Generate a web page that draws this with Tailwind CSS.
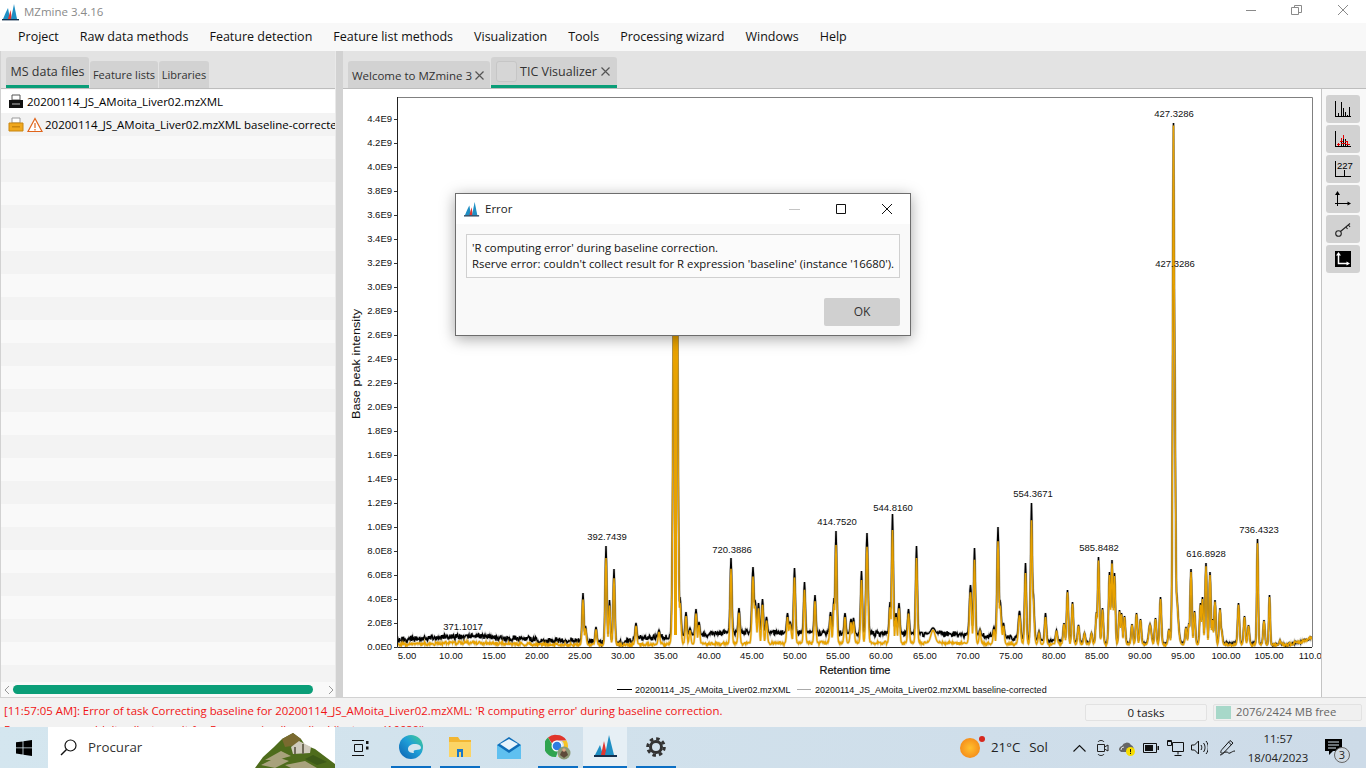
<!DOCTYPE html>
<html lang="en">
<head>
<meta charset="utf-8">
<title>MZmine 3.4.16</title>
<script src="https://cdn.jsdelivr.net/npm/@tailwindcss/browser@4"></script>
</head>
<body class="m-0 overflow-hidden bg-white">
<div class="relative flex h-[768px] w-[1366px] flex-col overflow-hidden font-['Open_Sans','Noto_Sans',sans-serif] text-black">

  <!-- title bar -->
  <div class="flex h-[23px] shrink-0 items-center bg-white">
    <svg class="ml-[2px] h-[18px] w-[18px]" viewBox="0 0 18 18"><path d="M1 16 4 9 6 5 8 16Z" fill="#1f8fc4"/><path d="M6 16 8.500 7 10 16Z" fill="#e2362f"/><path d="M9 16 12 1 15 16Z" fill="#1f8fc4"/><path d="M0 16h17v1.400H0Z" fill="#12304f"/></svg>
    <span class="ml-[4px] text-[11.500px] text-[#8a8a8a]">MZmine 3.4.16</span>
    <div class="ml-auto flex h-full items-center">
      <svg class="h-[23px] w-[46px]" viewBox="0 0 46 23"><path d="M18 10.500h10" stroke="#8a8a8a" fill="none"/></svg>
      <svg class="h-[23px] w-[46px]" viewBox="0 0 46 23"><path d="M17.500 7.500h7v7h-7ZM20.500 7.500v-2h7v7h-3" stroke="#8a8a8a" fill="none"/></svg>
      <svg class="h-[23px] w-[46px]" viewBox="0 0 46 23"><path d="M18 5l10 10M28 5 18 15" stroke="#8a8a8a" fill="none"/></svg>
    </div>
  </div>

  <!-- menu bar -->
  <div class="flex h-[28px] shrink-0 items-center gap-[21px] bg-[#f8f8f8] pl-[18px] pt-[1px] text-[12.500px] text-[#111]">
    <span>Project</span><span>Raw data methods</span><span>Feature detection</span><span>Feature list methods</span><span>Visualization</span><span>Tools</span><span>Processing wizard</span><span>Windows</span><span>Help</span>
  </div>

  <!-- main -->
  <div class="flex min-h-0 flex-1 bg-[#d2d2d2] pb-[1px]">
    <!-- left pane -->
    <div class="flex w-[335px] shrink-0 flex-col pl-[1px]">
      <div class="flex h-[38px] shrink-0 items-end gap-[1px] border-b border-[#bdbdbd] bg-[#e3e3e3] pl-[5px]">
        <div class="flex h-[31px] w-[83px] items-center justify-center rounded-t-[3px] border-b-[3px] border-[#0a9e78] bg-[#d2d2d2] pt-[3px] text-[12.500px] text-[#333]">MS data files</div>
        <div class="flex h-[27px] w-[68px] items-center justify-center rounded-t-[3px] bg-[#d2d2d2] pt-[2px] text-[11px] text-[#333]">Feature lists</div>
        <div class="flex h-[27px] w-[50px] items-center justify-center rounded-t-[3px] bg-[#d2d2d2] pt-[2px] text-[11px] text-[#333]">Libraries</div>
      </div>
      <div class="flex min-h-0 flex-1 flex-col overflow-hidden bg-[#f9f9f9] pt-[1px] text-[11.500px]">
        <div class="flex h-[23px] shrink-0 items-center whitespace-nowrap bg-white pl-[7px]">
          <svg class="h-[16px] w-[16px] shrink-0" viewBox="0 0 16 16"><path d="M4 1h8v5H4Z" fill="#fff" stroke="#555"/><path d="M1 6h14v8H1Z" fill="#111"/><path d="M4 9h8v2H4Z" fill="#666"/></svg>
          <span class="ml-[3px]">20200114_JS_AMoita_Liver02.mzXML</span>
        </div>
        <div class="flex h-[23px] shrink-0 items-center overflow-hidden whitespace-nowrap bg-[#f3f3f3] pl-[7px]">
          <svg class="h-[16px] w-[16px] shrink-0" viewBox="0 0 16 16"><path d="M4 1h8v5H4Z" fill="#fff" stroke="#999"/><path d="M1 6h14v8H1Z" fill="#f0a81e" stroke="#c98610"/><path d="M4 9h8v1.500H4Z" fill="#c98610"/></svg>
          <svg class="ml-[3px] h-[16px] w-[16px] shrink-0" viewBox="0 0 16 16"><path d="M8 1.500 15 14.500H1Z" fill="#fff" stroke="#e0651c" stroke-width="1.200"/><path d="M8 6v5M8 12v1.500" stroke="#e0651c" stroke-width="1.200"/></svg>
          <span class="ml-[2px]">20200114_JS_AMoita_Liver02.mzXML baseline-corrected</span>
        </div>
        <div class="h-[23px] shrink-0"></div>
        <div class="h-[23px] shrink-0 bg-[#f3f3f3]"></div>
        <div class="h-[23px] shrink-0"></div>
        <div class="h-[23px] shrink-0 bg-[#f3f3f3]"></div>
        <div class="h-[23px] shrink-0"></div>
        <div class="h-[23px] shrink-0 bg-[#f3f3f3]"></div>
        <div class="h-[23px] shrink-0"></div>
        <div class="h-[23px] shrink-0 bg-[#f3f3f3]"></div>
        <div class="h-[23px] shrink-0"></div>
        <div class="h-[23px] shrink-0 bg-[#f3f3f3]"></div>
        <div class="h-[23px] shrink-0"></div>
        <div class="h-[23px] shrink-0 bg-[#f3f3f3]"></div>
        <div class="h-[23px] shrink-0"></div>
        <div class="h-[23px] shrink-0 bg-[#f3f3f3]"></div>
        <div class="h-[23px] shrink-0"></div>
        <div class="h-[23px] shrink-0 bg-[#f3f3f3]"></div>
        <div class="h-[23px] shrink-0"></div>
        <div class="h-[23px] shrink-0 bg-[#f3f3f3]"></div>
        <div class="h-[23px] shrink-0"></div>
        <div class="h-[23px] shrink-0 bg-[#f3f3f3]"></div>
        <div class="h-[23px] shrink-0"></div>
        <div class="h-[23px] shrink-0 bg-[#f3f3f3]"></div>
        <div class="h-[23px] shrink-0"></div>
        <div class="h-[23px] shrink-0 bg-[#f3f3f3]"></div>
      </div>
      <div class="flex h-[15px] shrink-0 items-center bg-[#f9f9f9]">
        <svg class="ml-[2px] h-[10px] w-[8px]" viewBox="0 0 8 10"><path d="M6 1 2 5l4 4" stroke="#999" fill="none"/></svg>
        <div class="ml-[2px] h-[9px] w-[300px] rounded-full bg-[#0a9e78]"></div>
        <svg class="ml-[14px] h-[10px] w-[8px]" viewBox="0 0 8 10"><path d="M2 1l4 4-4 4" stroke="#999" fill="none"/></svg>
      </div>
    </div>

    <!-- divider -->
    <div class="w-[8px] shrink-0 border-l border-[#e9e9e9] bg-[#d2d2d2]"></div>

    <!-- right pane -->
    <div class="flex min-w-0 flex-1 flex-col">
      <div class="flex h-[38px] shrink-0 items-end gap-[1px] border-b border-[#bdbdbd] bg-[#e3e3e3] pl-[5px]">
        <div class="flex h-[27px] w-[142px] items-center justify-center gap-[3px] rounded-t-[3px] bg-[#d2d2d2] pt-[2px] pr-[2px] text-[11.500px] text-[#333]">
          <span>Welcome to MZmine 3</span>
          <svg class="h-[9px] w-[9px]" viewBox="0 0 9 9"><path d="M.5.5l8 8M8.500.5l-8 8" stroke="#555" stroke-width="1.200"/></svg>
        </div>
        <div class="flex h-[31px] w-[126px] items-center rounded-t-[3px] border-b-[3px] border-[#0a9e78] bg-[#d2d2d2] pl-[5px] text-[12.500px] text-[#333]">
          <div class="h-[21px] w-[21px] rounded-[3px] border border-[#c6c6c6] bg-[#d6d6d6]"></div>
          <span class="ml-[3px] pt-[3px]">TIC Visualizer</span>
          <svg class="ml-[4px] mt-[1px] h-[9px] w-[9px]" viewBox="0 0 9 9"><path d="M.5.5l8 8M8.500.5l-8 8" stroke="#555" stroke-width="1.200"/></svg>
        </div>
      </div>
      <div class="flex min-h-0 flex-1">
        <svg id="chart" class="h-full w-[978px] shrink-0 bg-white font-['Liberation_Sans',sans-serif] text-[9.500px]" viewBox="343 89 978 608">
          <defs><clipPath id="plot"><rect x="397" y="97" width="915" height="550"/></clipPath></defs>
          <g id="series" clip-path="url(#plot)"></g>
          <path d="M397.500 97.500H1312.500V647" fill="none" stroke="#808080"/>
          <path d="M397.500 97V647.500H1312" fill="none" stroke="#222"/>
          <path d="M394 119.500h3M394 143.500h3M394 167.500h3M394 191.500h3M394 215.500h3M394 239.500h3M394 263.500h3M394 287.500h3M394 311.500h3M394 335.500h3M394 359.500h3M394 383.500h3M394 407.500h3M394 431.500h3M394 455.500h3M394 479.500h3M394 503.500h3M394 527.500h3M394 551.500h3M394 575.500h3M394 599.500h3M394 623.500h3M394 647.500h3" stroke="#333"/>
          <g text-anchor="end" fill="#111">
            <text x="392" y="122">4.4E9</text><text x="392" y="146">4.2E9</text><text x="392" y="170">4.0E9</text><text x="392" y="194">3.8E9</text><text x="392" y="218">3.6E9</text><text x="392" y="242">3.4E9</text><text x="392" y="266">3.2E9</text><text x="392" y="290">3.0E9</text><text x="392" y="314">2.8E9</text><text x="392" y="338">2.6E9</text><text x="392" y="362">2.4E9</text><text x="392" y="386">2.2E9</text><text x="392" y="410">2.0E9</text><text x="392" y="434">1.8E9</text><text x="392" y="458">1.6E9</text><text x="392" y="482">1.4E9</text><text x="392" y="506">1.2E9</text><text x="392" y="530">1.0E9</text><text x="392" y="554">8.0E8</text><text x="392" y="578">6.0E8</text><text x="392" y="602">4.0E8</text><text x="392" y="626">2.0E8</text><text x="392" y="650">0.0E0</text>
          </g>
          <g text-anchor="middle" fill="#111">
            <text x="407" y="659">5.00</text><text x="451" y="659">10.00</text><text x="494" y="659">15.00</text><text x="537" y="659">20.00</text><text x="580" y="659">25.00</text><text x="623" y="659">30.00</text><text x="666" y="659">35.00</text><text x="709" y="659">40.00</text><text x="752" y="659">45.00</text><text x="795" y="659">50.00</text><text x="838" y="659">55.00</text><text x="881" y="659">60.00</text><text x="925" y="659">65.00</text><text x="968" y="659">70.00</text><text x="1011" y="659">75.00</text><text x="1054" y="659">80.00</text><text x="1097" y="659">85.00</text><text x="1140" y="659">90.00</text><text x="1183" y="659">95.00</text><text x="1226" y="659">100.00</text><text x="1269" y="659">105.00</text><text x="1313" y="659">110.00</text>
            <text x="463" y="630">371.1017</text><text x="607" y="540">392.7439</text><text x="732" y="553">720.3886</text><text x="837" y="525">414.7520</text><text x="893" y="511">544.8160</text><text x="1033" y="497">554.3671</text><text x="1099" y="551">585.8482</text><text x="1206" y="557">616.8928</text><text x="1259" y="533">736.4323</text><text x="1174" y="117">427.3286</text><text x="1175" y="267">427.3286</text>
            <text x="855" y="674" font-size="11" font-weight="500" stroke="#111" stroke-width=".2">Retention time</text>
            <text transform="translate(360 364) rotate(-90)" font-size="11" textLength="110" lengthAdjust="spacingAndGlyphs">Base peak intensity</text>
          </g>
          <path d="M617 689.500h15" stroke="#000"/>
          <path d="M797 689.500h14" stroke="#aaa"/>
          <text x="635" y="692.500" font-size="9" fill="#111">20200114_JS_AMoita_Liver02.mzXML</text>
          <text x="815" y="692.500" font-size="9" fill="#111">20200114_JS_AMoita_Liver02.mzXML baseline-corrected</text>
        </svg>
        <!-- toolbar -->
        <div class="flex flex-1 flex-col items-center gap-[2px] border-l border-[#c4c4c4] bg-[#f8f8f8] pt-[6px] pr-[2px]">
          <div class="flex h-[28px] w-[34px] items-center justify-center rounded-[3px] bg-[#d2d2d2]">
            <svg class="h-[16px] w-[16px]" viewBox="0 0 16 16" shape-rendering="crispEdges"><path d="M.5 0v15.500H16M3.500 15v-3M6.500 15V1M8.500 15V7M10.500 15v-4M12.500 15v-1M14.500 15V6" fill="none" stroke="#000"/></svg>
          </div>
          <div class="flex h-[28px] w-[34px] items-center justify-center rounded-[3px] bg-[#d2d2d2]">
            <svg class="h-[16px] w-[16px]" viewBox="0 0 16 16" shape-rendering="crispEdges"><path d="M.5 0v15.500H16M3.500 15v-2M6.500 15V9M8.500 15V6M10.500 15V8M12.500 15v-3" fill="none" stroke="#000"/><path d="M8.500 4v4M6.500 7v4M2 13.500h3M5 10h3M8 6h1M10 10h3M12.500 11v3M3.500 12v3M11 13.500h4M6 12.500h5" fill="none" stroke="#e00000"/></svg>
          </div>
          <div class="flex h-[28px] w-[34px] items-center justify-center rounded-[3px] bg-[#d2d2d2]">
            <svg class="h-[16px] w-[16px] overflow-visible" viewBox="0 0 16 16"><path d="M.5 0v15.500H16M9.500 15V9" fill="none" stroke="#000" shape-rendering="crispEdges"/><text x="2" y="7.500" font-size="9.500" font-family="Liberation Sans">227</text></svg>
          </div>
          <div class="flex h-[28px] w-[34px] items-center justify-center rounded-[3px] bg-[#d2d2d2]">
            <svg class="h-[16px] w-[16px]" viewBox="0 0 16 16"><path d="M2.500 1v14M0 12.500h15" fill="none" stroke="#000"/><path d="M2.500 0 5 4H0ZM16 12.500l-3.500-2v4Z" fill="#000"/></svg>
          </div>
          <div class="flex h-[28px] w-[34px] items-center justify-center rounded-[3px] bg-[#d2d2d2]">
            <svg class="h-[16px] w-[16px]" viewBox="0 0 16 16"><circle cx="3.500" cy="12.500" r="2.800" fill="none" stroke="#222" stroke-width="1.100"/><path d="M5.500 10.500 15 2.500M11 6l1.500 2M13.500 4l1.500 2" fill="none" stroke="#222" stroke-width="1.100"/></svg>
          </div>
          <div class="flex h-[28px] w-[34px] items-center justify-center rounded-[3px] bg-[#d2d2d2]">
            <svg class="h-[16px] w-[16px]" viewBox="0 0 16 16"><path d="M0 0h16v16H0Z" fill="#000"/><path d="M3.500 3v9.500H13" fill="none" stroke="#fff" stroke-width="1.500"/><path d="M3.500 1 6 4.500H1ZM15 12.500l-3.500-2v4Z" fill="#fff"/></svg>
          </div>
        </div>
      </div>
    </div>
  </div>

  <!-- log bar -->
  <div class="flex h-[29px] shrink-0 bg-[#f2f2f2]">
    <div class="min-w-0 flex-1 overflow-hidden whitespace-nowrap pl-[4px] pt-[3px] text-[11.400px] leading-[19px] text-[#f01414]">
      <div>[11:57:05 AM]: Error of task Correcting baseline for 20200114_JS_AMoita_Liver02.mzXML: 'R computing error' during baseline correction.</div>
      <div>Rserve error: couldn't collect result for R expression 'baseline' (instance '16680').</div>
    </div>
    <div class="mt-[6px] flex h-[17px] w-[122px] items-center justify-center rounded-[2px] border border-[#e2e2e2] bg-[#f4f4f4] text-[11.500px] text-[#222]">0 tasks</div>
    <div class="mr-[4px] ml-[6px] mt-[6px] flex h-[17px] w-[149px] items-center rounded-[2px] border border-[#e2e2e2] bg-[#f0f0f0] pl-[2px] text-[11.300px] text-[#666]">
      <div class="h-[13px] w-[15px] bg-[#a7d8c9]"></div><span class="ml-[5px]">2076/2424 MB free</span>
    </div>
  </div>

  <!-- taskbar -->
  <div class="flex h-[41px] shrink-0 items-center bg-linear-to-r from-[#d4e6ef] to-[#cddbe8]">
    <div class="flex h-full w-[48px] items-center justify-center">
      <svg class="h-[16px] w-[16px]" viewBox="0 0 16 16"><path d="M0 2.300 6.600 1.400V7.500H0ZM7.400 1.300 16 0V7.500H7.400ZM0 8.300H6.600V14.500L0 13.600ZM7.400 8.300H16V16L7.400 14.700Z" fill="#000"/></svg>
    </div>
    <div class="flex h-full w-[287px] items-center overflow-hidden bg-white">
      <svg class="ml-[12px] h-[17px] w-[17px] shrink-0" viewBox="0 0 17 17"><circle cx="10.500" cy="6.500" r="5.500" fill="none" stroke="#111" stroke-width="1.200"/><path d="M6.500 10.500 1 16" stroke="#111" stroke-width="1.400"/></svg>
      <span class="ml-[11px] text-[13.300px] text-[#333]">Procurar</span>
      <svg class="ml-auto h-[41px] w-[80px] shrink-0" viewBox="0 0 80 41"><path d="M0 41 8 30 19 20 27 12 38 6 46 12 50 18 60 22 72 31 80 37V41Z" fill="#4e6c1c"/><path d="M27 12 38 6 46 12 42 18 30 20Z" fill="#7a6a30"/><path d="M6 38 22 30 34 34 20 41ZM10 33 26 24 36 29 22 33ZM30 38 50 34 62 41H36Z" fill="#a8a27c"/><path d="M36 20 44 14 56 20 55 26 38 27Z" fill="#cfcabc"/><path d="M40 20v7M48 17v10" stroke="#6f6a58" stroke-width="2"/><path d="M58 28 72 35 62 38 50 32Z" fill="#3d5a18"/></svg>
    </div>
    <div class="flex h-full w-[50px] items-center justify-center">
      <svg class="h-[16px] w-[17px]" viewBox="0 0 17 16"><path d="M0 .5h12M0 15.500h12M2.500 4.500h8v7h-8Z" fill="none" stroke="#111"/><path d="M14 1h2.500v3H14ZM14 6.500h2.500v3H14Z" fill="#111"/></svg>
    </div>
    <div class="ml-[6px] flex h-full w-[40px] items-center justify-center border-b-[2px] border-[#0b6fc4]">
      <svg class="h-[24px] w-[24px]" viewBox="0 0 24 24"><defs><linearGradient id="edge" x1="1" y1="0" x2="0" y2="1"><stop offset="0" stop-color="#45d08a"/><stop offset=".45" stop-color="#1f9fd8"/><stop offset="1" stop-color="#0b5fb0"/></linearGradient></defs><circle cx="12" cy="12" r="12" fill="url(#edge)"/><path d="M9 14c0-3 3-5 7-5 3 0 6 1 6 4 0 1-2 2-5 2-2 0-3 1-2 3-3 0-6-1-6-4Z" fill="#d4e6ef"/></svg>
    </div>
    <div class="ml-[9px] flex h-full w-[40px] items-center justify-center border-b-[2px] border-[#0b6fc4]">
      <svg class="h-[20px] w-[22px]" viewBox="0 0 22 20"><path d="M0 0h9l2 3h11v17H0Z" fill="#f2b632"/><path d="M0 5h22v15H0Z" fill="#fbd465"/><path d="M8 12h6v8h-2v-5h-2v5H8Z" fill="#1a78c8"/></svg>
    </div>
    <div class="ml-[9px] flex h-full w-[40px] items-center justify-center">
      <svg class="h-[22px] w-[24px]" viewBox="0 0 24 22"><path d="M0 8 12 0 24 8V22H0Z" fill="#0f6db8"/><path d="M0 8 12 16 24 8V22H0Z" fill="#5fc0f0"/><path d="M3 7 12 2l9 5-9 6Z" fill="#e8f4fc"/></svg>
    </div>
    <div class="ml-[9px] flex h-full w-[40px] items-center justify-center border-b-[2px] border-[#0b6fc4]">
      <svg class="h-[26px] w-[26px]" viewBox="0 0 26 26"><path d="M12 1a11 11 0 0 1 9.500 5.500H12a5.500 5.500 0 0 0-5 3L3 3.500A11 11 0 0 1 12 1Z" fill="#e0352b"/><path d="M21.500 6.500A11 11 0 0 1 13 23l4.500-8A5.500 5.500 0 0 0 17 7Z" fill="#f7c325"/><path d="M3 3.500 8 12a5.500 5.500 0 0 0 5 5l-2 6A11 11 0 0 1 3 3.500Z" fill="#2fa44f"/><circle cx="12" cy="12" r="5.500" fill="#fff"/><circle cx="12" cy="12" r="4.300" fill="#2f7de1"/><circle cx="19" cy="19" r="6.500" fill="#8c9a78"/><path d="M15 21c1-3 2-5 4-5s3 2 4 5l-4 3Z" fill="#5e4a3a"/><circle cx="19" cy="16" r="1.800" fill="#d8a888"/></svg>
    </div>
    <div class="ml-[5px] flex h-full w-[44px] items-center justify-center border-b-[2px] border-[#0b6fc4] bg-[#e6eff5]">
      <svg class="h-[23px] w-[23px]" viewBox="0 0 23 23"><path d="M1 20 6 10 9 20Z" fill="#1f8fc4"/><path d="M7 20 10 6 13 20Z" fill="#e2362f"/><path d="M11 20 15 0 20 20Z" fill="#1f8fc4"/><path d="M0 20h23v2H0Z" fill="#12304f"/></svg>
    </div>
    <div class="ml-[9px] flex h-full w-[40px] items-center justify-center border-b-[2px] border-[#0b6fc4]">
      <svg class="h-[20px] w-[20px]" viewBox="0 0 20 20"><circle cx="10" cy="10" r="5.500" fill="none" stroke="#333" stroke-width="3"/><circle cx="10" cy="10" r="8.300" fill="none" stroke="#333" stroke-width="3" stroke-dasharray="3.500 3" /></svg>
    </div>
    <div class="ml-auto flex h-full w-[406px] items-center">
      <div class="relative h-[22px] w-[22px] shrink-0">
        <div class="h-[20px] w-[20px] translate-y-[1px] rounded-full bg-radial from-[#ffc02e] to-[#f07a12]"></div>
        <div class="absolute top-[-1px] right-[-3px] h-[6px] w-[6px] rounded-full bg-[#d6281e]"></div>
      </div>
      <div class="ml-[9px] flex w-[76px] shrink-0 gap-[9px] text-[13.300px] text-[#222]"><span>21°C</span><span>Sol</span></div>
      <div class="flex h-full w-[24px] shrink-0 items-center justify-center"><svg class="h-[8px] w-[13px]" viewBox="0 0 13 8"><path d="M.5 7.500l6-6 6 6" fill="none" stroke="#111" stroke-width="1.100"/></svg></div>
      <div class="flex h-full w-[24px] shrink-0 items-center justify-center"><svg class="h-[18px] w-[14px]" viewBox="0 0 14 18"><path d="M1.500 5.500h7v7h-7ZM8.500 8l3.500-2v6l-3.500-2M2 3c1-2 5-2 6 0M2 15c1 2 5 2 6 0" fill="none" stroke="#222"/></svg></div>
      <div class="flex h-full w-[24px] shrink-0 items-center justify-center"><svg class="h-[18px] w-[18px]" viewBox="0 0 18 18"><path d="M1 11a4 4 0 0 1 3-4 5 5 0 0 1 9-1 4 4 0 0 1 2 6l-3 1H3Z" fill="#666"/><path d="M3 11a3 3 0 0 1 3-3" fill="none" stroke="#ddd"/><circle cx="12.500" cy="12.500" r="4.500" fill="#f6dc00"/><path d="M12.500 10v3.200M12.500 14v1" stroke="#111"/></svg></div>
      <div class="flex h-full w-[24px] shrink-0 items-center justify-center"><svg class="h-[10px] w-[16px]" viewBox="0 0 16 10"><path d="M.5.500h13v9H.5Z" fill="none" stroke="#111"/><path d="M2 2h8v6H2ZM14.500 3H16v4h-1.500Z" fill="#111"/></svg></div>
      <div class="flex h-full w-[24px] shrink-0 items-center justify-center"><svg class="h-[16px] w-[17px]" viewBox="0 0 17 16"><path d="M5.500 2.500h11v9h-11ZM11 11.500v3M7.500 15.500h7M.5.500h4v5h-4Z" fill="none" stroke="#111"/><path d="M1 1h3v1H1Z" fill="#111"/></svg></div>
      <div class="flex h-full w-[24px] shrink-0 items-center justify-center"><svg class="h-[15px] w-[17px]" viewBox="0 0 17 15"><path d="M.5 5h3l4-4v13l-4-4h-3ZM10 5c1 1.500 1 3.500 0 5M12.500 3c2 2.500 2 6.500 0 9M15 1c3 3.500 3 9.500 0 13" fill="none" stroke="#111"/></svg></div>
      <div class="ml-[4px] flex h-full w-[24px] shrink-0 items-center justify-center"><svg class="h-[17px] w-[17px]" viewBox="0 0 17 17"><path d="M11 1.500 14 4 5.500 13c-1 1-3 1.500-3.500 1-.5-1 0-2.500 1-3.500ZM9.500 3 12.500 6M1 16c3 0 3-3 6-3s2 2 4 1 3-2 5-2" fill="none" stroke="#111"/></svg></div>
      <div class="flex w-[78px] shrink-0 flex-col items-center text-[11.400px] leading-[19px] text-[#222]"><span>11:57</span><span>18/04/2023</span></div>
      <div class="relative flex h-full w-[32px] shrink-0 items-center justify-center">
        <svg class="h-[16px] w-[17px] -translate-y-[1px]" viewBox="0 0 17 16"><path d="M0 0h17v12H8l-4 4v-4H0Z" fill="#000"/><path d="M3 3h11M3 6h11M3 9h8" stroke="#d2e1ec"/></svg>
        <div class="absolute top-[20px] left-[17px] flex h-[16px] w-[16px] items-center justify-center rounded-full border border-[#666] bg-[#cfd9e2] text-[11px] text-[#222]">3</div>
      </div>
    </div>
  </div>

  <!-- dialog -->
  <div class="absolute top-[193px] left-[455px] flex h-[143px] w-[456px] flex-col border border-[#6d6d6d] bg-[#f9f9f9] shadow-[0_3px_14px_rgba(0,0,0,0.35)]">
    <div class="flex h-[30px] shrink-0 items-center bg-white">
      <svg class="ml-[8px] h-[16px] w-[16px]" viewBox="0 0 18 18"><path d="M1 16 4 9 6 5 8 16Z" fill="#1f8fc4"/><path d="M6 16 8.500 7 10 16Z" fill="#e2362f"/><path d="M9 16 12 1 15 16Z" fill="#1f8fc4"/><path d="M0 16h17v1.400H0Z" fill="#12304f"/></svg>
      <span class="ml-[5px] text-[11.500px] text-[#222]">Error</span>
      <svg class="ml-auto h-[14px] w-[46px]" viewBox="0 0 46 14"><path d="M0 7.500h11" stroke="#c4c4c4"/></svg>
      <svg class="h-[14px] w-[12px]" viewBox="0 0 12 14"><path d="M1.500 2.500h9v9h-9Z" fill="none" stroke="#111"/></svg>
      <svg class="mr-[17px] ml-[34px] h-[14px] w-[12px]" viewBox="0 0 12 14"><path d="M1 2l10 10M11 2 1 12" fill="none" stroke="#111"/></svg>
    </div>
    <div class="mx-[10px] mt-[10px] flex h-[44px] shrink-0 flex-col justify-center border border-[#d0d0d0] bg-[#fbfbfb] pl-[5px] text-[11.350px] leading-[16px] whitespace-nowrap text-[#111]">
      <div>'R computing error' during baseline correction.</div>
      <div>Rserve error: couldn't collect result for R expression 'baseline' (instance '16680').</div>
    </div>
    <div class="mt-[20px] mr-[10px] flex h-[28px] w-[76px] items-center justify-center self-end rounded-[2px] bg-[#d0d0d0] text-[12px] text-[#333]">OK</div>
  </div>
</div>

<script>
const lerp=(p,x)=>{for(let i=1;i<p.length;i++){if(x<=p[i][0]){const a=p[i-1],b=p[i];return a[1]+(b[1]-a[1])*(x-a[0])/(b[0]-a[0]);}}return p[p.length-1][1];};
const bB=[[397,640],[440,637],[470,636],[500,638],[535,639],[538,642],[560,640],[590,642],[620,643],[640,638],[670,637],[690,635],[700,635],[730,632],[800,633],[900,634],[950,634],[1000,637],[1050,641],[1100,643],[1250,643],[1270,645],[1285,645],[1300,642],[1312,638]];
const oB=[[397,644.5],[465,642.5],[530,644.5],[600,645],[700,644],[800,643],[950,643],[1000,644],[1060,644.5],[1270,645],[1285,645],[1300,642],[1312,638]];
const P=[[583,593],[585.7,626],[596,627],[606,546],[609.7,600],[614,569],[636,623],[659,630],[674.5,200,1.5],[675.5,200,1.8],[676.5,200,1.5],[680,597,1.2],[686,612],[690,628],[696,609],[699,622],[731,558],[739,608],[753,567,1.2],[755,600,1.5],[758.7,603],[762.7,599],[766.7,617],[787.7,613],[790,622,1.5],[794.3,568],[804.3,582],[815,595],[830.3,612],[834,598],[836,531],[845,613],[851,619],[853.7,618],[861.3,571],[867,533,1.2],[890,602],[892.3,514],[896,613],[899,603],[908.3,609],[916.7,546],[933,628,2.5],[970.7,585,1.3],[974.3,548],[980,629],[994,627],[998,527,1.1],[1000,600,1.5],[1003.3,623],[1019.7,611,1.3],[1025.7,563],[1031.7,503],[1033,590,1.3],[1039,631],[1045.7,613],[1056.7,630],[1064,623],[1067.3,590],[1072.3,602],[1078.7,625],[1084.7,633],[1091.7,633],[1096.7,612],[1098.3,557],[1102.7,608],[1109.3,572],[1112,560],[1114.3,573],[1119.7,610],[1121.3,613],[1124.7,616],[1132,624],[1136.7,613],[1140.3,619],[1150,624,1.5],[1155.3,618],[1160.7,597],[1169,629],[1173.7,123,.9],[1174,290,1.4],[1176,590,2.2],[1186,627],[1189,623],[1191,569],[1194.3,611],[1200.7,603],[1202.7,597],[1206,563],[1210,572],[1212.7,619],[1215,600],[1220,608],[1221.7,629],[1238.3,603],[1244.3,616],[1248.3,625],[1257.7,539,.8],[1264,620],[1269.3,595,.8],[1280,640,.8]];
let seed=12345;const rnd=()=>{seed=(seed*1664525+1013904223)%4294967296;return seed/4294967296-.5;};
const line=(base,amp,tf)=>{let pts=[];for(let x=397;x<=1312;x+=.5){let y=lerp(base,x)+rnd()*amp(x)+Math.sin(x*.9)*.5;for(const p of P){const c=Math.round(p[0]*2)/2;const d=(x-c)/((p[2]||1)*.85);if(Math.abs(d)>4)continue;const t=tf(p,x),v=t+(lerp(base,x)-t)*(1-Math.exp(-d*d/2));if(v<y)y=v;}pts.push(x+','+y.toFixed(1));}return pts.join(' ');};
const b=line(bB,x=>x<1050?5.5:2.5,p=>p[1]);
const o=line(oB,x=>x<1270?3:3.5,p=>{const h=647-p[1];const f=h>400?.995:(p[0]<1050?.88:.96);return 647-h*f;});
const add=(pts,c,w,op)=>{const e=document.createElementNS('http://www.w3.org/2000/svg','polyline');e.setAttribute('points',pts);e.setAttribute('fill','none');e.setAttribute('stroke',c);e.setAttribute('stroke-width',w);e.setAttribute('stroke-opacity',op);document.getElementById('series').appendChild(e);};
add(b,'#777',2.6,.35);add(b,'#000',1.4,1);add(o,'#b59a5a',2.6,.35);add(o,'#e8a200',1.4,1);add('675.5,200 675.5,635','#e8a200',3,1);
</script>
</body>
</html>
